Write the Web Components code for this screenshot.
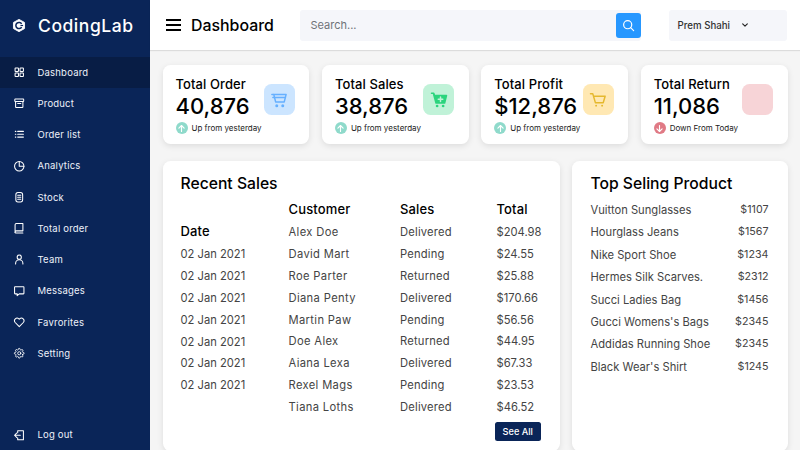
<!DOCTYPE html>
<html>
<head>
<meta charset="utf-8">
<title>Dashboard</title>
<style>
  html, body { margin: 0; height: 100%; overflow: hidden; }
  body { display: flex; font-family: "Inter", "Liberation Sans", sans-serif; background: #f5f5f5; color: #000; }
  .page { flex: 1; min-width: 0; display: flex; flex-direction: column; }
</style>
</head>
<body>
<app-sidebar>
  <nav-link icon="grid" active>Dashboard</nav-link>
  <nav-link icon="box">Product</nav-link>
  <nav-link icon="list">Order list</nav-link>
  <nav-link icon="pie">Analytics</nav-link>
  <nav-link icon="stack">Stock</nav-link>
  <nav-link icon="book">Total order</nav-link>
  <nav-link icon="user">Team</nav-link>
  <nav-link icon="message">Messages</nav-link>
  <nav-link icon="heart">Favrorites</nav-link>
  <nav-link icon="cog">Setting</nav-link>
  <nav-link slot="bottom" icon="logout">Log out</nav-link>
</app-sidebar>
<div class="page">
  <top-bar></top-bar>
  <dash-content>
    <stat-card label="Total Order" value="40,876" tint="blue" cart="alt">Up from yesterday</stat-card>
    <stat-card label="Total Sales" value="38,876" tint="green" cart="add">Up from yesterday</stat-card>
    <stat-card label="Total Profit" value="$12,876" tint="yellow" cart="plain">Up from yesterday</stat-card>
    <stat-card label="Total Return" value="11,086" tint="red" trend="down">Down From Today</stat-card>
    <recent-sales slot="lower"></recent-sales>
    <top-products slot="lower"></top-products>
  </dash-content>
</div>

<script>
const ICONS = {
  grid: '<rect x="4" y="4" width="6.5" height="6.5" rx="1"/><rect x="13.5" y="4" width="6.5" height="6.5" rx="1"/><rect x="4" y="13.5" width="6.5" height="6.5" rx="1"/><rect x="13.5" y="13.5" width="6.5" height="6.5" rx="1"/>',
  box: '<rect x="3.5" y="4" width="17" height="4.5" rx="1"/><path d="M5 8.5V19a1 1 0 0 0 1 1h12a1 1 0 0 0 1-1V8.5M9 12.5h6"/>',
  list: '<path d="M9 6.5h11M9 12h11M9 17.5h11M4.5 6.5h1M4.5 12h1M4.5 17.5h1"/>',
  pie: '<circle cx="12" cy="12" r="9"/><path d="M12 3v9h9"/>',
  stack: '<rect x="5.5" y="3" width="13" height="18" rx="4"/><path d="M9 8h6M9 12h6M9 16h6"/>',
  book: '<path d="M6.5 3H19v14H6.5A2.5 2.5 0 0 0 4 19.5V5.5A2.5 2.5 0 0 1 6.5 3z"/><path d="M4 19.5A1.5 1.5 0 0 0 6 21h13"/>',
  user: '<circle cx="12" cy="8" r="4"/><path d="M5 21v-1a7 7 0 0 1 14 0v1"/>',
  message: '<path d="M4 3.5h16a1 1 0 0 1 1 1V16a1 1 0 0 1-1 1h-8l-4 3.5V17H4a1 1 0 0 1-1-1V4.5a1 1 0 0 1 1-1z"/>',
  heart: '<path d="M12 20.5l-7.8-8a5 5 0 0 1 7-7.1l.8.8.8-.8a5 5 0 0 1 7 7.1z"/>',
  cog: '<g transform="translate(12 12) scale(.85) translate(-12 -12)"><circle cx="12" cy="12" r="3.5"/><path d="M19.4 15a1.65 1.65 0 0 0 .33 1.82l.06.06a2 2 0 0 1-2.83 2.83l-.06-.06a1.65 1.65 0 0 0-2.82 1.18V21a2 2 0 0 1-4 0v-.09A1.65 1.65 0 0 0 7.18 19.73l-.06.06a2 2 0 0 1-2.83-2.83l.06-.06a1.65 1.65 0 0 0-1.18-2.82H3a2 2 0 0 1 0-4h.09A1.65 1.65 0 0 0 4.27 7.18l-.06-.06a2 2 0 0 1 2.83-2.83l.06.06a1.65 1.65 0 0 0 2.82-1.18V3a2 2 0 0 1 4 0v.09a1.65 1.65 0 0 0 2.82 1.18l.06-.06a2 2 0 0 1 2.83 2.83l-.06.06a1.65 1.65 0 0 0 1.18 2.82H21a2 2 0 0 1 0 4h-.09a1.65 1.65 0 0 0-1.51 1z"/></g>',
  logout: '<path d="M3 12h11M7 8l-4 4 4 4"/><path d="M9 7V3.5h11v17H9V17"/>'
};

const CARTS = {
  alt: '<path d="M2.5 4.5h19l-2.5 10H7.5L5 4.5"/><path d="M3.8 8.5H20.5"/><circle cx="9" cy="19.5" r="1" fill="currentColor"/><circle cx="17" cy="19.5" r="1" fill="currentColor"/>',
  add: '<path d="M2 3h3l1 3h16l-2.500 10H8L5 5" fill="currentColor"/><circle cx="9.5" cy="20" r="1.8" fill="currentColor" stroke="none"/><circle cx="17.5" cy="20" r="1.8" fill="currentColor" stroke="none"/><path d="M14 8v6M11 11h6" stroke="#c0f2d8"/>',
  plain: '<path d="M2 3.5h3l3.5 12h10.5l2.5-8.5H6.2"/><circle cx="9.5" cy="19.5" r="1.3" fill="currentColor" stroke="none"/><circle cx="17.5" cy="19.5" r="1.3" fill="currentColor" stroke="none"/>'
};

class AppSidebar extends HTMLElement {
  constructor() {
    super();
    this.attachShadow({ mode: 'open' }).innerHTML = `
      <style>
        :host { display: flex; flex-direction: column; flex: 0 0 150px; height: 450px; background: #0a2558; color: #fff; }
        .logo { display: flex; align-items: center; height: 50px; padding-left: 11.5px; gap: 12.5px; font-size: 17.5px; font-weight: 500; letter-spacing: .55px; }
        .logo svg { width: 14px; height: 15px; }
        nav { display: flex; flex-direction: column; padding-top: 6.5px; flex: 1; }
        .bottom { margin-top: auto; margin-bottom: -.5px; display: flex; flex-direction: column; }
      </style>
      <div class="logo">
        <svg viewBox="0 0 24 24"><path d="M12 1.5l9.5 5.25v10.5L12 22.5l-9.500-5.250V6.750z" fill="#fff" stroke="#fff" stroke-width="1.5" stroke-linejoin="round"/><path d="M16.500 9.300a5.300 5.300 0 1 0 0 5.400" fill="none" stroke="#0a2558" stroke-width="2.6"/><path d="M14.500 12h4.500" stroke="#0a2558" stroke-width="2"/></svg>
        <span>CodingLab</span>
      </div>
      <nav><slot></slot><div class="bottom"><slot name="bottom"></slot></div></nav>`;
  }
}

class NavLink extends HTMLElement {
  constructor() {
    super();
    this.attachShadow({ mode: 'open' }).innerHTML = `
      <style>
        :host { display: flex; align-items: center; height: 31.25px; font-size: 9.5px; font-weight: 400; letter-spacing: .2px; color: #eef2fa; }
        :host([active]) { background: #081d45; }
        span { width: 37.5px; display: flex; justify-content: center; }
        svg { width: 12.5px; height: 12.5px; fill: none; stroke: #fff; stroke-width: 2; stroke-linecap: round; stroke-linejoin: round; }
      </style>
      <span><svg viewBox="0 0 24 24">${ICONS[this.getAttribute('icon')]}</svg></span>
      <slot></slot>`;
  }
}

class TopBar extends HTMLElement {
  constructor() {
    super();
    this.attachShadow({ mode: 'open' }).innerHTML = `
      <style>
        :host { display: flex; align-items: center; flex: 0 0 50px; padding-left: 16px; background: #fff; box-shadow: 0 1px 1px rgba(0,0,0,.1); position: relative; }
        .title { display: flex; align-items: center; gap: 10px; width: 134px; font-size: 15.9px; font-weight: 500; }
        .title svg { width: 15px; height: 12px; stroke: #000; stroke-width: 1.8; }
        .search { display: flex; align-items: center; justify-content: space-between; box-sizing: border-box; width: 340.5px; height: 31px; padding: 0 0 0 10.5px; background: #f5f6fa; border-radius: 3px; font-size: 11px; color: #6f7378; }
        .search b { display: flex; align-items: center; justify-content: center; width: 25px; height: 25px; background: #2697ff; border-radius: 3px; }
        .search svg { width: 13px; height: 13px; fill: none; stroke: #fff; stroke-width: 2.2; stroke-linecap: round; }
        .profile { display: flex; align-items: center; box-sizing: border-box; margin-left: 28.5px; width: 118px; height: 31px; padding-left: 8.5px; background: #f5f6fa; border-radius: 3px; font-size: 9.7px; font-weight: 500; color: #333; gap: 11px; }
        .profile svg { width: 8px; height: 8px; fill: none; stroke: #222; stroke-width: 3.4; stroke-linecap: round; stroke-linejoin: round; }
      </style>
      <div class="title"><svg viewBox="0 0 15 12"><path d="M0 1h15M0 6h15M0 11h15"/></svg><span>Dashboard</span></div>
      <div class="search"><span>Search...</span><b><svg viewBox="0 0 24 24"><circle cx="10.5" cy="10.5" r="7.5"/><path d="M16 16l5.500 5.500"/></svg></b></div>
      <div class="profile"><span>Prem Shahi</span><svg viewBox="0 0 24 24"><path d="M5 8.500l7 7 7-7"/></svg></div>`;
  }
}

class DashContent extends HTMLElement {
  constructor() {
    super();
    this.attachShadow({ mode: 'open' }).innerHTML = `
      <style>
        :host { display: flex; flex-direction: column; flex: 1; min-height: 0; padding: 15px 12.5px 0; gap: 17px; }
        .cards { display: grid; grid-template-columns: repeat(4, 1fr); gap: 12.5px; }
        .lower { display: grid; grid-template-columns: 397px 1fr; gap: 12.5px; flex: 1; min-height: 0; }
      </style>
      <div class="cards"><slot></slot></div>
      <div class="lower"><slot name="lower"></slot></div>`;
  }
}

class StatCard extends HTMLElement {
  constructor() {
    super();
    const down = this.getAttribute('trend') === 'down';
    const cart = CARTS[this.getAttribute('cart')];
    this.attachShadow({ mode: 'open' }).innerHTML = `
      <style>
        :host { display: flex; justify-content: space-between; box-sizing: border-box; height: 79px; padding: 11px 14.5px 0 13px; background: #fff; border-radius: 7.5px; box-shadow: 0 2px 6px rgba(0,0,0,.1); }
        .label { font-size: 13px; font-weight: 500; line-height: 16px; letter-spacing: .1px; white-space: nowrap; }
        .value { font-size: 22px; font-weight: 500; line-height: 28px; white-space: nowrap; }
        .trend { display: flex; align-items: center; gap: 4px; margin-top: 2px; font-size: 8px; line-height: 12px; color: #222; white-space: nowrap; }
        .arrow { display: flex; align-items: center; justify-content: center; width: 12px; height: 12px; border-radius: 50%; background: ${down ? '#e07a85' : '#8fdacb'}; }
        .arrow svg { width: 9px; height: 9px; fill: none; stroke: #fff; stroke-width: 3; stroke-linecap: round; stroke-linejoin: round; }
        .tile { display: flex; align-items: center; justify-content: center; flex: 0 0 31px; height: 31px; margin-top: 8px; border-radius: 7.5px; }
        .tile svg { width: 18px; height: 18px; fill: none; stroke: currentColor; stroke-width: 2; stroke-linecap: round; stroke-linejoin: round; }
        :host([tint=blue]) .tile { background: #cce5ff; color: #66b0ff; }
        :host([tint=green]) .tile { background: #c0f2d8; color: #2bd47d; }
        :host([tint=yellow]) .tile { background: #ffe8b3; color: #e5b82e; }
        :host([tint=red]) .tile { background: #f7d4d7; }
      </style>
      <div>
        <div class="label">${this.getAttribute('label')}</div>
        <div class="value">${this.getAttribute('value')}</div>
        <div class="trend">
          <span class="arrow"><svg viewBox="0 0 24 24"><path d="${down ? 'M12 4v16M5 13l7 7 7-7' : 'M12 20V4M5 11l7-7 7 7'}"/></svg></span>
          <slot></slot>
        </div>
      </div>
      <div class="tile">${cart ? `<svg viewBox="0 0 24 24">${cart}</svg>` : ''}</div>`;
  }
}

const SALES = [
  ['Alex Doe', 'Delivered', '$204.98'], ['David Mart', 'Pending', '$24.55'], ['Roe Parter', 'Returned', '$25.88'],
  ['Diana Penty', 'Delivered', '$170.66'], ['Martin Paw', 'Pending', '$56.56'], ['Doe Alex', 'Returned', '$44.95'],
  ['Aiana Lexa', 'Delivered', '$67.33'], ['Rexel Mags', 'Pending', '$23.53'], ['Tiana Loths', 'Delivered', '$46.52']
];

class RecentSales extends HTMLElement {
  constructor() {
    super();
    const col = (name, title, items) => `<div class="col ${name}"><div class="head">${title}</div>${items.map(t => `<div>${t}</div>`).join('')}</div>`;
    this.attachShadow({ mode: 'open' }).innerHTML = `
      <style>
        :host { display: flex; flex-direction: column; box-sizing: border-box; height: 290px; padding: 13px 19px 0 18px; background: #fff; border-radius: 7.5px; box-shadow: 0 2px 6px rgba(0,0,0,.1); }
        h2 { margin: 0; font-size: 15.7px; font-weight: 500; line-height: 20px; }
        .cols { display: grid; grid-template-columns: 108px 111.5px 96.5px 1fr; margin-top: 2.5px; font-size: 11.2px; line-height: 21.88px; color: #444; white-space: nowrap; }
        .head { font-size: 13px; font-weight: 500; color: #000; line-height: 25.5px; letter-spacing: .15px; }
        .date { padding-top: 22px; }
        .customer { letter-spacing: .35px; }
        .sales { letter-spacing: .2px; }
        button { display: block; align-self: flex-end; margin: 2.7px 0 0; width: 45.5px; height: 19.5px; padding: 0; border: 0; border-radius: 2.5px; background: #0a2558; color: #fff; font: 500 9.2px "Inter", "Liberation Sans", sans-serif; }
      </style>
      <h2>Recent Sales</h2>
      <div class="cols">
        ${col('date', 'Date', Array(7).fill('02 Jan 2021'))}
        ${col('customer', 'Customer', SALES.map(r => r[0]))}
        ${col('sales', 'Sales', SALES.map(r => r[1]))}
        ${col('total', 'Total', SALES.map(r => r[2]))}
      </div>
      <button>See All</button>`;
  }
}

const PRODUCTS = [
  ['Vuitton Sunglasses', '$1107'], ['Hourglass Jeans', '$1567'], ['Nike Sport Shoe', '$1234'], ['Hermes Silk Scarves.', '$2312'],
  ['Succi Ladies Bag', '$1456'], ['Gucci Womens\'s Bags', '$2345'], ['Addidas Running Shoe', '$2345'], ['Black Wear\'s Shirt', '$1245']
];

class TopProducts extends HTMLElement {
  constructor() {
    super();
    this.attachShadow({ mode: 'open' }).innerHTML = `
      <style>
        :host { display: block; box-sizing: border-box; height: 290px; padding: 13px 19px 0 18.5px; background: #fff; border-radius: 7.5px; box-shadow: 0 2px 6px rgba(0,0,0,.1); }
        h2 { margin: 0 0 5px; font-size: 15.7px; font-weight: 500; line-height: 20px; }
        div { display: flex; justify-content: space-between; font-size: 11.2px; line-height: 22.4px; color: #444; }
        span + span { font-size: 10.7px; }
      </style>
      <h2>Top Seling Product</h2>
      ${PRODUCTS.map(p => `<div><span>${p[0]}</span><span>${p[1]}</span></div>`).join('')}`;
  }
}

customElements.define('app-sidebar', AppSidebar);
customElements.define('nav-link', NavLink);
customElements.define('top-bar', TopBar);
customElements.define('dash-content', DashContent);
customElements.define('stat-card', StatCard);
customElements.define('recent-sales', RecentSales);
customElements.define('top-products', TopProducts);
</script>
</body>
</html>
